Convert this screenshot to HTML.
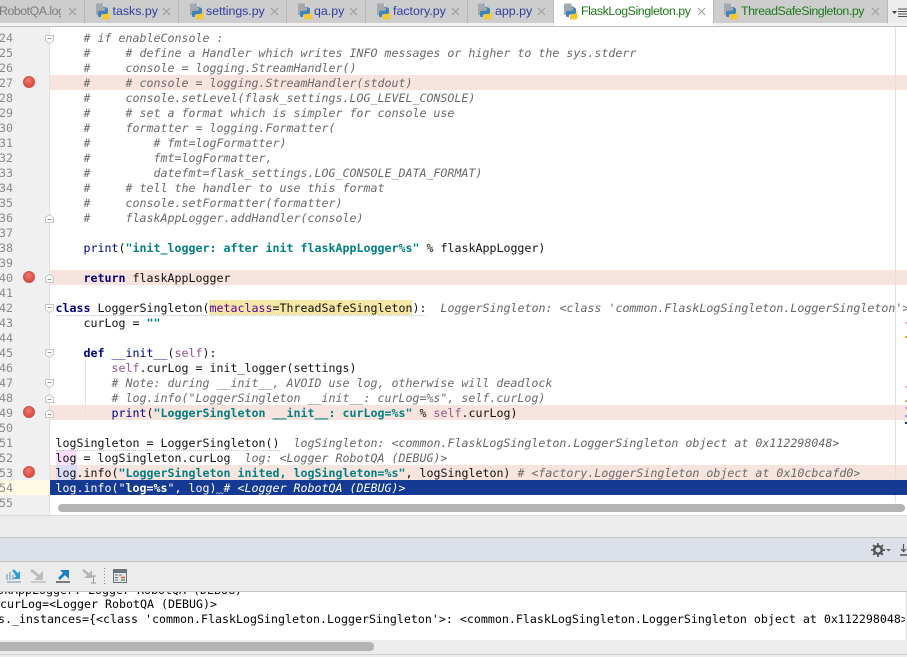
<!DOCTYPE html>
<html><head><meta charset="utf-8"><style>
html,body{margin:0;padding:0;width:907px;height:657px;overflow:hidden;background:#ececec}
body{position:relative;font-family:"DejaVu Sans Mono","Liberation Mono",monospace;font-size:11.63px;filter:blur(.3px)}
.a{position:absolute}
.l{position:absolute;left:55.5px;height:15px;line-height:15px;margin-top:1px;white-space:pre;color:#111}
.n{position:absolute;left:-6px;width:19px;text-align:right;height:15px;line-height:15px;margin-top:1px;color:#8a8a8a}
.c{color:#6a6a6a;font-style:oblique}
.k{color:#000080;font-weight:bold}
.s{color:#008080;font-weight:bold}
.p{color:#94558d}
.m{color:#660099}
.b{color:#000080}
.d{color:#666;font-style:oblique}
.pink{position:absolute;left:50px;width:857px;height:15px;background:#f8e4df}
.bp{position:absolute;left:23px;width:12px;height:12px;border-radius:50%;background:radial-gradient(circle at 45% 35%,#ee7a70,#d9483f 75%);border:0.5px solid #c9534b;box-sizing:border-box}
.f{position:absolute;left:45px;width:9px;height:9px}
.t{position:absolute;top:0;height:23px;line-height:22px;font-family:"Liberation Sans",sans-serif;font-size:12.4px;color:#2f3d9e;white-space:pre}
.x{position:absolute;top:7px;width:9px;height:9px}
.sep{position:absolute;top:0;width:1px;height:23px;background:#b8b8b8}
.ic{position:absolute;top:3px;width:15px;height:17px}
</style></head><body>
<svg width="0" height="0" style="position:absolute"><defs>
<symbol id="py" viewBox="0 0 15 17"><path d="M1 .5h7l3 3V12H1z" fill="#a3a9ae"/><path d="M8 .5v3h3z" fill="#dfe1e3"/><path d="M3 13V9.500c0-1.200 1-1.700 2-1.700h3.500c1 0 1.500-.6 1.500-1.500V5H8V4.500h2.500c1.500 0 2.500.6 2.500 2v2.800c0 1-.6 1.700-1.700 1.700H7.500C6.500 11 6 11.700 6 12.500V14H4.500C3.500 14 3 13.500 3 13z" fill="#3f83b8"/><path d="M14.500 8v4.500c0 1.200-1 1.800-2 1.800H10c-1 0-1.500.6-1.500 1.500v.7h3c2 0 3-.8 3-2.500zM7 12.800h6.500v1.500H9c-1 0-2 .8-2 1.800z" fill="#f6c92f"/><path d="M14.500 7.500v6c0 2-1 3-3 3H9c-1.300 0-2-.6-2-1.800v-2c0-1 .7-1.700 1.700-1.700h3c1 0 1.800-.6 1.800-1.700V7.500z" fill="#f6c92f"/></symbol>
<symbol id="xx" viewBox="0 0 9 9"><path d="M1 1l7 7M8 1l-7 7" stroke="#9d9d9d" stroke-width="1.100" fill="none"/></symbol>
<symbol id="fu" viewBox="0 0 9 9"><path d="M.5.500h8v5l-4 3-4-3z" fill="#fff" stroke="#c6c6c6"/><path d="M2.500 3.500h4" stroke="#9a9a9a"/></symbol>
<symbol id="fd" viewBox="0 0 9 9"><path d="M.5 8.500h8v-5l-4-3-4 3z" fill="#fff" stroke="#c6c6c6"/><path d="M2.500 5.500h4" stroke="#9a9a9a"/></symbol>
</defs></svg>

<!-- tab bar -->
<div class="a" style="left:0;top:0;width:907px;height:23px;background:#cdcdcd"></div>
<div class="a" style="left:0;top:23px;width:907px;height:3px;background:#f2f2f2"></div>
<div class="a" style="left:0;top:26px;width:907px;height:1px;background:#bdbdbd"></div>
<div class="a" style="left:887px;top:0;width:20px;height:23px;background:#ececec"></div>
<div class="a" style="left:554px;top:0;width:159px;height:26px;background:#fff"></div>
<div class="sep" style="left:84px"></div><div class="sep" style="left:178px"></div><div class="sep" style="left:286px"></div><div class="sep" style="left:365px"></div><div class="sep" style="left:467px"></div><div class="sep" style="left:553px"></div><div class="sep" style="left:713px"></div><div class="sep" style="left:887px"></div>
<div class="t" style="left:-1px;color:#7c7c7c;width:62px;overflow:hidden;letter-spacing:-.5px">RobotQA.log</div><svg class="x" style="left:68px"><use href="#xx"/></svg>
<svg class="ic" style="left:95px"><use href="#py"/></svg><div class="t" style="left:112.500px">tasks.py</div><svg class="x" style="left:162px"><use href="#xx"/></svg>
<svg class="ic" style="left:189px"><use href="#py"/></svg><div class="t" style="left:206px;letter-spacing:-.05px">settings.py</div><svg class="x" style="left:270px"><use href="#xx"/></svg>
<svg class="ic" style="left:297px"><use href="#py"/></svg><div class="t" style="left:314px">qa.py</div><svg class="x" style="left:349px"><use href="#xx"/></svg>
<svg class="ic" style="left:376px"><use href="#py"/></svg><div class="t" style="left:393px">factory.py</div><svg class="x" style="left:451px"><use href="#xx"/></svg>
<svg class="ic" style="left:477px"><use href="#py"/></svg><div class="t" style="left:495px">app.py</div><svg class="x" style="left:537px"><use href="#xx"/></svg>
<svg class="ic" style="left:563px"><use href="#py"/></svg><div class="t" style="left:581px;color:#1d7a1d;letter-spacing:-.45px">FlaskLogSingleton.py</div><svg class="x" style="left:697px"><use href="#xx"/></svg>
<svg class="ic" style="left:723px"><use href="#py"/></svg><div class="t" style="left:741px;color:#1d7a1d;letter-spacing:-.45px">ThreadSafeSingleton.py</div><svg class="x" style="left:871px"><use href="#xx"/></svg>
<svg class="a" style="left:891px;top:7px" width="16" height="10"><path d="M1 4h5l-2.500 3z" fill="#444"/><path d="M7 2h9M7 4.500h9M7 7h9M7 9.500h9" stroke="#555" stroke-width="1"/></svg>

<!-- editor -->
<div class="a" style="left:0;top:27px;width:907px;height:488px;background:#fff"></div>
<div class="a" style="left:0;top:27px;width:50px;height:488px;background:#f0f0f0"></div>
<div class="a" style="left:49px;top:27px;width:1px;height:488px;background:#e2e2e2"></div>
<div class="a" style="left:0;top:480px;width:50px;height:15px;background:#fffae3"></div>

<div class="pink" style="top:75px"></div>
<div class="pink" style="top:270px"></div>
<div class="pink" style="top:405px"></div>
<div class="pink" style="top:465px"></div>
<div class="a" style="left:50px;top:480px;width:857px;height:15px;background:#153a93"></div>
<div class="a" style="left:895px;top:27px;width:1px;height:453px;background:#e0e0e0"></div>
<div class="a" style="left:895px;top:495px;width:1px;height:8px;background:#e0e0e0"></div>

<div class="a" style="left:85px;top:360px;width:1px;height:60px;background:#e4e4e4"></div>

<div class="a" style="left:209px;top:300px;width:203px;height:15px;background:#f5e8a6"></div>
<div class="a" style="left:56px;top:450px;width:21px;height:15px;background:#fbe0fb"></div>
<div class="a" style="left:56px;top:465px;width:21px;height:15px;background:#d9dcf8"></div>
<div class="a" style="left:56px;top:315px;width:370px;border-top:1px dotted #c8c8c8"></div>
<div class="a" style="left:56px;top:450px;width:224px;border-top:1px dotted #c4c4c4"></div>

<!-- line numbers -->
<div class="n" style="top:30px">24</div><div class="n" style="top:45px">25</div><div class="n" style="top:60px">26</div><div class="n" style="top:75px">27</div><div class="n" style="top:90px">28</div><div class="n" style="top:105px">29</div><div class="n" style="top:120px">30</div><div class="n" style="top:135px">31</div><div class="n" style="top:150px">32</div><div class="n" style="top:165px">33</div><div class="n" style="top:180px">34</div><div class="n" style="top:195px">35</div><div class="n" style="top:210px">36</div><div class="n" style="top:225px">37</div><div class="n" style="top:240px">38</div><div class="n" style="top:255px">39</div><div class="n" style="top:270px">40</div><div class="n" style="top:285px">41</div><div class="n" style="top:300px">42</div><div class="n" style="top:315px">43</div><div class="n" style="top:330px">44</div><div class="n" style="top:345px">45</div><div class="n" style="top:360px">46</div><div class="n" style="top:375px">47</div><div class="n" style="top:390px">48</div><div class="n" style="top:405px">49</div><div class="n" style="top:420px">50</div><div class="n" style="top:435px">51</div><div class="n" style="top:450px">52</div><div class="n" style="top:465px">53</div><div class="n" style="top:480px">54</div><div class="n" style="top:495px">55</div>

<!-- breakpoints -->
<div class="bp" style="top:76px"></div><div class="bp" style="top:271px"></div><div class="bp" style="top:406px"></div><div class="bp" style="top:466px"></div>

<!-- fold marks -->
<svg class="f" style="top:35px"><use href="#fu"/></svg>
<svg class="f" style="top:214px"><use href="#fd"/></svg>
<svg class="f" style="top:274px"><use href="#fd"/></svg>
<svg class="f" style="top:304px"><use href="#fu"/></svg>
<svg class="f" style="top:349px"><use href="#fu"/></svg>
<svg class="f" style="top:379px"><use href="#fu"/></svg>
<svg class="f" style="top:394px"><use href="#fd"/></svg>
<svg class="f" style="top:409px"><use href="#fd"/></svg>

<!-- code -->
<div class="l c" style="top:30px">    # if enableConsole :</div>
<div class="l c" style="top:45px">    #     # define a Handler which writes INFO messages or higher to the sys.stderr</div>
<div class="l c" style="top:60px">    #     console = logging.StreamHandler()</div>
<div class="l c" style="top:75px">    #     # console = logging.StreamHandler(stdout)</div>
<div class="l c" style="top:90px">    #     console.setLevel(flask_settings.LOG_LEVEL_CONSOLE)</div>
<div class="l c" style="top:105px">    #     # set a format which is simpler for console use</div>
<div class="l c" style="top:120px">    #     formatter = logging.Formatter(</div>
<div class="l c" style="top:135px">    #         # fmt=logFormatter)</div>
<div class="l c" style="top:150px">    #         fmt=logFormatter,</div>
<div class="l c" style="top:165px">    #         datefmt=flask_settings.LOG_CONSOLE_DATA_FORMAT)</div>
<div class="l c" style="top:180px">    #     # tell the handler to use this format</div>
<div class="l c" style="top:195px">    #     console.setFormatter(formatter)</div>
<div class="l c" style="top:210px">    #     flaskAppLogger.addHandler(console)</div>
<div class="l" style="top:240px">    <span class="b">print</span>(<span class="s">"init_logger: after init flaskAppLogger%s"</span> % flaskAppLogger)</div>
<div class="l" style="top:270px">    <span class="k">return</span> flaskAppLogger</div>
<div class="l" style="top:300px"><span class="k">class</span> LoggerSingleton(<span class="m">metaclass</span>=ThreadSafeSingleton):  <span class="d">LoggerSingleton: &lt;class 'common.FlaskLogSingleton.LoggerSingleton'&gt;</span></div>
<div class="l" style="top:315px">    curLog = <span class="s">""</span></div>
<div class="l" style="top:345px">    <span class="k">def</span> <span class="b">__init__</span>(<span class="p">self</span>):</div>
<div class="l" style="top:360px">        <span class="p">self</span>.curLog = init_logger(settings)</div>
<div class="l c" style="top:375px">        # Note: during __init__, AVOID use log, otherwise will deadlock</div>
<div class="l c" style="top:390px">        # log.info("LoggerSingleton __init__: curLog=%s", self.curLog)</div>
<div class="l" style="top:405px">        <span class="b">print</span>(<span class="s">"LoggerSingleton __init__: curLog=%s"</span> % <span class="p">self</span>.curLog)</div>
<div class="l" style="top:435px">logSingleton = LoggerSingleton()  <span class="d">logSingleton: &lt;common.FlaskLogSingleton.LoggerSingleton object at 0x112298048&gt;</span></div>
<div class="l" style="top:450px">log = logSingleton.curLog  <span class="d">log: &lt;Logger RobotQA (DEBUG)&gt;</span></div>
<div class="l" style="top:465px">log.info(<span class="s">"LoggerSingleton inited, logSingleton=%s"</span>, logSingleton) <span class="c"># &lt;factory.LoggerSingleton object at 0x10cbcafd0&gt;</span></div>
<div class="l" style="top:480px;color:#fff">log.info("<b>log=%s</b>", log) <i># &lt;Logger RobotQA (DEBUG)&gt;</i></div>
<svg class="a" style="left:216px;top:492px" width="8" height="3"><path d="M0 2l1.500-1.500L3 2l1.500-1.500L6 2l1.500-1.500" stroke="#9fb0d8" fill="none" stroke-width=".8"/></svg>

<!-- error stripes -->
<div class="a" style="left:905px;top:322px;width:2px;height:2px;background:#f5b8c0"></div>
<div class="a" style="left:905px;top:336px;width:2px;height:2px;background:#e5b800"></div>
<div class="a" style="left:905px;top:386px;width:2px;height:2px;background:#f5b8c0"></div>
<div class="a" style="left:905px;top:400px;width:2px;height:2px;background:#c8c090"></div>
<div class="a" style="left:905px;top:407px;width:2px;height:2px;background:#e79be7"></div>
<div class="a" style="left:905px;top:415px;width:2px;height:2px;background:#9a9af0"></div>
<div class="a" style="left:905px;top:422px;width:2px;height:2px;background:#153a93"></div>

<!-- editor scrollbar -->
<div class="a" style="left:58px;top:504px;width:847px;height:8px;border-radius:4px;background:#b4b4b4"></div>

<!-- bottom panels -->
<div class="a" style="left:0;top:515px;width:907px;height:22px;background:#ececec;border-top:1px solid #d9d9d9;box-sizing:border-box"></div>
<div class="a" style="left:0;top:537px;width:907px;height:25px;background:#dce0e8;border-top:1px solid #c4c4c4;border-bottom:1px solid #c0c0c0;box-sizing:border-box"></div>
<div class="a" style="left:0;top:562px;width:907px;height:29px;background:#ececec"></div>
<div class="a" style="left:0;top:591px;width:907px;height:1px;background:#c4c4c4"></div>

<!-- gear + download -->
<svg class="a" style="left:871px;top:543px" width="36" height="14"><circle cx="7" cy="7" r="3.800" fill="none" stroke="#555" stroke-width="2.600"/><path d="M7 0v14M0 7h14M2 2l10 10M12 2L2 12" stroke="#555" stroke-width="1.700" stroke-dasharray="2.200 9.600 2.200"/><path d="M15 6h5l-2.500 2.500z" fill="#666"/><path d="M32.500 1v7M30 6l2.500 2.500L35 6" stroke="#555" fill="none" stroke-width="1.200"/><path d="M29 12h7" stroke="#555" stroke-width="1.500"/></svg>

<!-- toolbar icons -->
<svg class="a" style="left:5px;top:567px" width="130" height="17">
<path d="M2 15h14" stroke="#9ab0c4" stroke-width="1.500"/><path d="M2 13V7M5 13V5M8 13V8" stroke="#9bb3c9" stroke-width="1.600"/>
<path d="M8 4l4 3 3-3v8H8l3-2.500z" fill="#2c9bd6"/><path d="M8 3l5 5" stroke="#2c9bd6" stroke-width="2.500"/>
<path d="M26 15h15" stroke="#bdbdbd" stroke-width="1.500"/><path d="M26 3l9 7" stroke="#bdbdbd" stroke-width="3"/><path d="M38 4v9h-9z" fill="#bdbdbd"/>
<path d="M51 15h14" stroke="#555" stroke-width="1.500"/><path d="M54 12l7-7" stroke="#1d7fc4" stroke-width="3"/><path d="M55 3h9v9z" fill="#1d7fc4"/>
<path d="M78 3l6 5" stroke="#b5b5b5" stroke-width="2.500"/><path d="M87 3v8h-8z" fill="#b5b5b5"/><path d="M86 9h5M88.500 9v7M86 16h5" stroke="#999" stroke-width="1"/>
<path d="M99.500 1v16" stroke="#888" stroke-width="1" stroke-dasharray="1 2"/>
<rect x="108.500" y="2.500" width="13" height="13" fill="#e6e6e6" stroke="#66757f"/><rect x="109" y="3" width="12" height="3" fill="#66757f"/><path d="M110 8h3M110 10.500h3M110 13h3M114 8h3" stroke="#66757f"/><path d="M116 10.500h4" stroke="#e04a3f" stroke-width="1.500"/><path d="M116 13h4" stroke="#3faa4a" stroke-width="1.500"/>
</svg>

<!-- console -->
<div class="a" style="left:0;top:592px;width:905px;height:48px;background:#fff;overflow:hidden">
<div class="l" style="left:-24px;top:-10px;color:#000">flaskAppLogger: Logger RobotQA (DEBUG)</div>
<div class="l" style="left:0;top:4px;color:#000">curLog=&lt;Logger RobotQA (DEBUG)&gt;</div>
<div class="l" style="left:-2px;top:19px;color:#000">s._instances={&lt;class 'common.FlaskLogSingleton.LoggerSingleton'&gt;: &lt;common.FlaskLogSingleton.LoggerSingleton object at 0x112298048&gt;</div>
</div>
<div class="a" style="left:0;top:642px;width:374px;height:9px;background:#b4b4b4;border-radius:0 4px 4px 0"></div>
<div class="a" style="left:0;top:654px;width:907px;height:1px;background:#cfcfcf"></div>
</body></html>
